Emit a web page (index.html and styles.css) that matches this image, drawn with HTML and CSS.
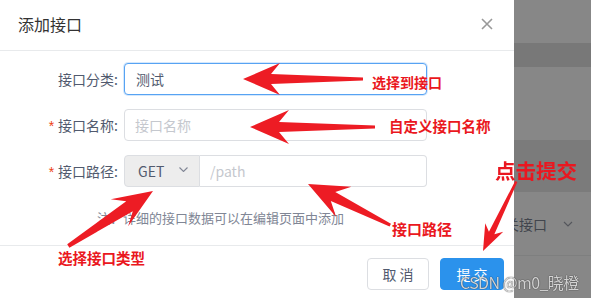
FILE: index.html
```html
<!DOCTYPE html>
<html lang="zh-CN">
<head>
    <meta charset="UTF-8">
    <title>添加接口</title>
    <link rel="stylesheet" href="styles.css">
</head>
<body>
    <!-- page behind the dialog -->
    <div class="app">
        <div class="app-top"></div>
        <div class="app-tabs"></div>
        <div class="app-gap"></div>
        <div class="app-band"></div>
        <div class="app-row">
            <span>相关接口</span>
            <svg class="app-chevron" width="10" height="6" viewBox="0 0 10 6"><path d="M1 1l4 4 4-4" fill="none" stroke="#808695" stroke-width="1.2"/></svg>
        </div>
    </div>
    <div class="mask"></div>

    <div class="modal">
        <div class="modal-header">
            <span class="modal-title">添加接口</span>
            <svg class="modal-close" width="12" height="12" viewBox="0 0 12 12"><path d="M1 1l10 10M11 1L1 11" stroke="#999" stroke-width="1.6"/></svg>
        </div>
        <div class="modal-body">
            <div class="form-row">
                <label class="form-label">接口分类:</label>
                <input class="input input-focus" value="测试">
            </div>
            <div class="form-row">
                <label class="form-label"><span class="req">*</span>接口名称:</label>
                <input class="input" placeholder="接口名称">
            </div>
            <div class="form-row">
                <label class="form-label"><span class="req">*</span>接口路径:</label>
                <div class="input-group">
                    <div class="method">
                        <span>GET</span>
                        <svg width="9" height="5" viewBox="0 0 9 5"><path d="M.5.5l4 4 4-4" fill="none" stroke="#808695" stroke-width="1.1"/></svg>
                    </div>
                    <input class="input input-append" placeholder="/path">
                </div>
            </div>
            <p class="hint">注：详细的接口数据可以在编辑页面中添加</p>
        </div>
        <div class="modal-footer">
            <button class="btn">取 消</button>
            <button class="btn btn-primary">提 交</button>
        </div>
    </div>

    <!-- screenshot annotations -->
    <div class="notes">
        <svg class="arrows" width="591" height="298" viewBox="0 0 591 298">
            <g fill="#ed1c24">
                <path transform="translate(243 79)" d="M0 0L37 -16L28 -5L120 -1.5L120 1.5L28 5L37 16Z"/>
                <path transform="translate(250 127)" d="M0 0L39 -17L29 -5L125 -1.5L125 1.5L29 5L39 17Z"/>
                <path transform="translate(153 191) rotate(147)" d="M0 0L40 -16L28 -6L101 -2L101 2L28 6L40 16Z"/>
                <path transform="translate(308 184) rotate(26.6)" d="M0 0L40 -17L28 -5L92 -1.5L92 1.5L28 5L40 17Z"/>
                <path transform="translate(483 251) rotate(-64.4)" d="M0 0L26 -10L20 -3L77 -1.2L77 1.2L20 3L26 10Z"/>
            </g>
        </svg>
        <span class="note note-cat">选择到接口</span>
        <span class="note note-name">自定义接口名称</span>
        <span class="note note-type">选择接口类型</span>
        <span class="note note-path">接口路径</span>
        <span class="note note-submit">点击提交</span>
    </div>
    <div class="watermark">CSDN @m0_晓橙</div>
</body>
</html>
```

FILE: styles.css
```css
body {
    margin: 0;
    font-family: "Noto Sans CJK SC", "Noto Sans", sans-serif;
    font-size: 14px;
    color: #515a6e;
    background-color: #ffffff;
    overflow: hidden;
}

/* page behind the mask */
.app {
    display: flex;
    flex-direction: column;
    height: 298px;
}

.app-top {
    height: 43px;
}

.app-tabs {
    height: 24px;
    background-color: #d9d9d9;
}

.app-gap {
    height: 73px;
}

.app-band {
    height: 52px;
    background-color: #e2e2e2;
}

.app-row {
    height: 63px;
    display: flex;
    align-items: center;
    justify-content: flex-end;
    gap: 16px;
    padding-right: 18px;
    border-bottom: 1px solid #e8eaec;
    line-height: 20px;
}

.mask {
    position: fixed;
    inset: 0;
    background-color: rgba(55, 55, 55, 0.6);
}

/* dialog */
.modal {
    position: fixed;
    left: 0;
    top: 0;
    width: 514px;
    height: 298px;
    background-color: #ffffff;
}

.modal-header {
    height: 50px;
    display: flex;
    align-items: center;
    justify-content: space-between;
    padding: 0 21px 0 18px;
    border-bottom: 1px solid #e8eaec;
}

.modal-title {
    font-size: 16px;
    line-height: 22px;
    margin-top: -3px;
    color: #333333;
}

.modal-close {
    margin-top: -2px;
}

.modal-body {
    height: 182px;
    padding-top: 12px;
}

.form-row {
    display: flex;
    align-items: center;
    height: 32px;
    margin-bottom: 14px;
}

.form-label {
    width: 118px;
    margin-right: 6px;
    text-align: right;
    line-height: 20px;
    color: #515a6e;
}

.req {
    color: #ed4014;
    margin-right: 4px;
    font-family: "Liberation Sans", sans-serif;
}

.input {
    box-sizing: border-box;
    width: 303px;
    height: 32px;
    padding: 0 10px;
    border: 1px solid #dcdee2;
    border-radius: 4px;
    font-family: inherit;
    font-size: 14px;
    color: #515a6e;
    outline: none;
}

.input::placeholder {
    color: #c5c8ce;
}

.input-focus {
    padding-left: 11px;
    border-color: #57a3f3;
    box-shadow: 0 0 0 1px rgba(45, 140, 240, 0.2);
}

.input-group {
    display: flex;
}

.method {
    box-sizing: border-box;
    width: 76px;
    height: 32px;
    display: flex;
    align-items: center;
    justify-content: space-between;
    padding: 0 11px 0 13px;
    background-color: #ededed;
    border: 1px solid #dcdee2;
    border-radius: 4px 0 0 4px;
    color: #515a6e;
}

.method svg {
    margin-top: -3px;
}

.input-append {
    width: 227px;
    border-left: none;
    border-radius: 0 4px 4px 0;
}

.hint {
    margin: 23px 0 0 97px;
    font-size: 13px;
    line-height: 16px;
    color: #808695;
}

.modal-footer {
    display: flex;
    justify-content: flex-end;
    gap: 11px;
    padding: 12px 10px 0 0;
    border-top: 1px solid #e8eaec;
}

.btn {
    height: 32px;
    width: 62px;
    padding: 0;
    border: 1px solid #dcdee2;
    border-radius: 4px;
    background-color: #ffffff;
    font-family: inherit;
    font-size: 14px;
    color: #515a6e;
}

.btn-primary {
    width: 64px;
    border-color: #2b92ec;
    background-color: #2b92ec;
    color: #ffffff;
}

/* annotations drawn over the screenshot */
.notes {
    position: fixed;
    inset: 0;
    pointer-events: none;
}

.arrows {
    display: block;
}

.note {
    position: absolute;
    font-weight: 700;
    color: #ea1720;
    line-height: 20px;
    white-space: nowrap;
}

.note-cat {
    left: 372px;
    top: 72px;
    font-size: 14px;
}

.note-name {
    left: 389px;
    top: 116px;
    font-size: 14.5px;
}

.note-type {
    left: 58px;
    top: 248px;
    font-size: 14.5px;
}

.note-path {
    left: 392px;
    top: 219px;
    font-size: 15px;
}

.note-submit {
    left: 495px;
    top: 157px;
    font-size: 20.5px;
    line-height: 26px;
}

.watermark {
    position: fixed;
    left: 460px;
    top: 271px;
    font-size: 16px;
    letter-spacing: -0.6px;
    line-height: 22px;
    color: rgba(255, 255, 255, 0.8);
    text-shadow: 0 0 1px rgba(0, 0, 0, 0.7), 0 0 1px rgba(0, 0, 0, 0.5);
    white-space: nowrap;
}
```
